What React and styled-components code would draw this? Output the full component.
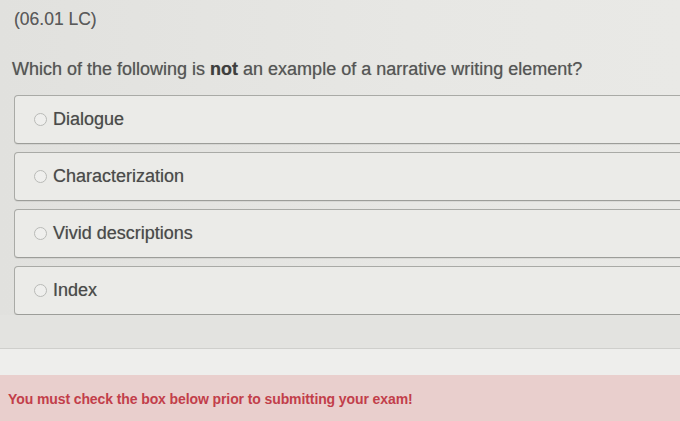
import React from "react";
import styled, { createGlobalStyle } from "styled-components";

const Global = createGlobalStyle`
  html, body { margin: 0; padding: 0; }
  body {
    background: #e4e4e1;
    font-family: "Liberation Sans", Arial, sans-serif;
    overflow: hidden;
  }
`;

const Page = styled.div`
  width: 680px;
  height: 421px;
  overflow: hidden;
  display: flex;
  flex-direction: column;
  background: linear-gradient(90deg, #e1e1de 0%, #e7e7e4 60%, #e9e9e6 100%);
`;

const Label = styled.div`
  padding: 10px 0 0 14px;
  height: 19px;
  font-size: 17.5px;
  line-height: 19px;
  color: #5a5a5a;
  text-shadow: 0 0 0.6px rgba(0, 0, 0, 0.3);
`;

const Question = styled.div`
  margin-top: 30px;
  padding-left: 12px;
  font-size: 18px;
  line-height: 20px;
  color: #555;
  text-shadow: 0 0 0.7px rgba(0, 0, 0, 0.35);
  b { color: #3e3e3e; }
`;

const Options = styled.div`
  margin-top: 16px;
  padding-left: 14px;
  display: flex;
  flex-direction: column;
  gap: 8px;
`;

const Option = styled.label`
  height: 47px;
  margin-right: -20px;
  display: flex;
  align-items: center;
  gap: 6px;
  padding-left: 19px;
  border: 1.5px solid #a9aaa6;
  border-bottom-color: #9c9d99;
  border-radius: 4px;
  background: #ebebe8;
  box-shadow: 0 1px 0 rgba(0, 0, 0, 0.06);
`;

const Radio = styled.span`
  width: 13px;
  height: 13px;
  border-radius: 50%;
  border: 1px solid #b9bab7;
  background: #efefed;
  box-sizing: border-box;
  flex: none;
`;

const OptionText = styled.span`
  font-size: 18px;
  color: #4a4a4a;
  text-shadow: 0 0 0.7px rgba(0, 0, 0, 0.35);
`;

const Gap = styled.div`
  height: 33px;
  border-bottom: 1px solid #cfcfcc;
  background: #e3e3e0;
`;

const Light = styled.div`
  height: 26px;
  background: #eeeeec;
`;

const Alert = styled.div`
  flex: 1;
  background: #e9cfcd;
  padding: 15px 0 0 8px;
  font-size: 14px;
  line-height: 18px;
  font-weight: bold;
  color: #c23e4a;
  letter-spacing: -0.1px;
`;

const options = ["Dialogue", "Characterization", "Vivid descriptions", "Index"];

export default function App() {
  return (
    <>
      <Global />
      <Page>
        <Label>(06.01 LC)</Label>
        <Question>
          Which of the following is <b>not</b> an example of a narrative writing element?
        </Question>
        <Options>
          {options.map((o) => (
            <Option key={o}>
              <Radio />
              <OptionText>{o}</OptionText>
            </Option>
          ))}
        </Options>
        <Gap />
        <Light />
        <Alert>You must check the box below prior to submitting your exam!</Alert>
      </Page>
    </>
  );
}
